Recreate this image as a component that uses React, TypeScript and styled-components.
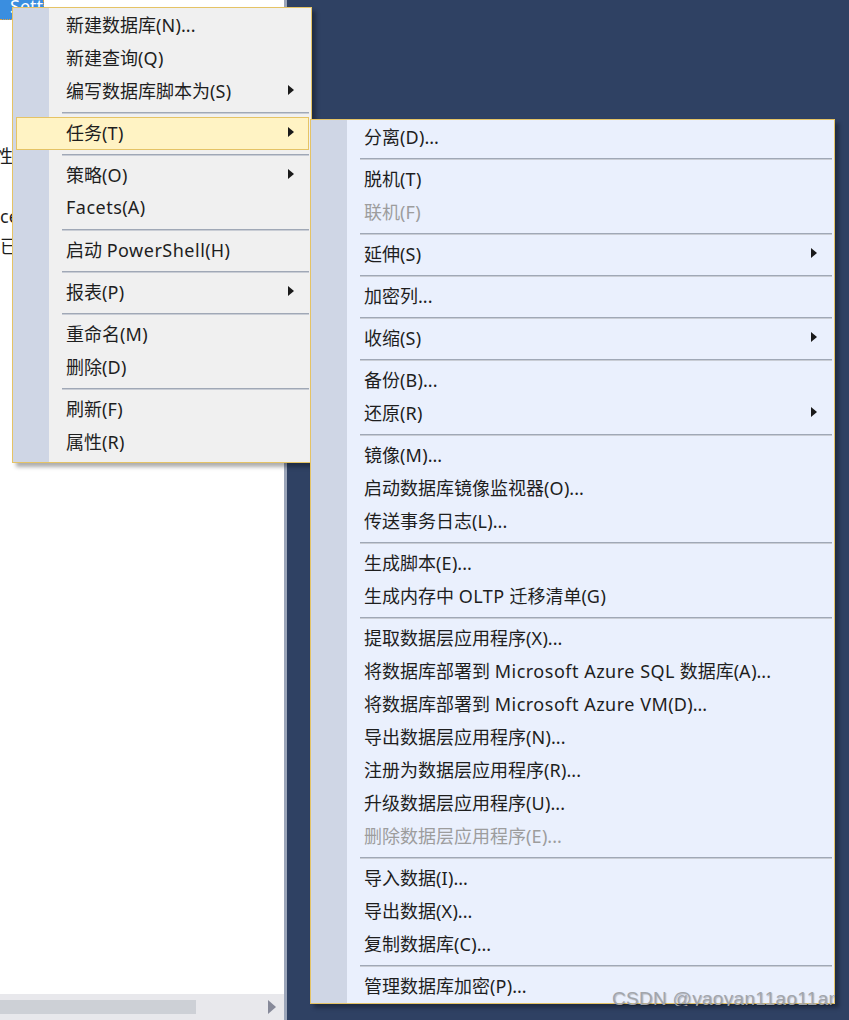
import React from 'react'
import styled, { createGlobalStyle } from 'styled-components'

const GlobalStyle = createGlobalStyle`
  html, body {
    margin: 0;
    padding: 0;
  }

  body {
    font-family: "Noto Sans", "Noto Sans CJK SC", sans-serif;
    font-size: 18px;
    color: #1e1e1e;
    overflow: hidden;
  }
`

type Entry =
  | { kind: 'item'; label: string; sub?: boolean; active?: boolean; disabled?: boolean }
  | { kind: 'sep' }

const sep: Entry = { kind: 'sep' }
const item = (label: string, extra: Partial<{ sub: boolean; active: boolean; disabled: boolean }> = {}): Entry => ({
  kind: 'item',
  label,
  ...extra,
})

const mainMenu: Entry[] = [
  item('新建数据库(N)...'),
  item('新建查询(Q)'),
  item('编写数据库脚本为(S)', { sub: true }),
  sep,
  item('任务(T)', { sub: true, active: true }),
  sep,
  item('策略(O)', { sub: true }),
  item('Facets(A)'),
  sep,
  item('启动 PowerShell(H)'),
  sep,
  item('报表(P)', { sub: true }),
  sep,
  item('重命名(M)'),
  item('删除(D)'),
  sep,
  item('刷新(F)'),
  item('属性(R)'),
]

const taskMenu: Entry[] = [
  item('分离(D)...'),
  sep,
  item('脱机(T)'),
  item('联机(F)', { disabled: true }),
  sep,
  item('延伸(S)', { sub: true }),
  sep,
  item('加密列...'),
  sep,
  item('收缩(S)', { sub: true }),
  sep,
  item('备份(B)...'),
  item('还原(R)', { sub: true }),
  sep,
  item('镜像(M)...'),
  item('启动数据库镜像监视器(O)...'),
  item('传送事务日志(L)...'),
  sep,
  item('生成脚本(E)...'),
  item('生成内存中 OLTP 迁移清单(G)'),
  sep,
  item('提取数据层应用程序(X)...'),
  item('将数据库部署到 Microsoft Azure SQL 数据库(A)...'),
  item('将数据库部署到 Microsoft Azure VM(D)...'),
  item('导出数据层应用程序(N)...'),
  item('注册为数据层应用程序(R)...'),
  item('升级数据层应用程序(U)...'),
  item('删除数据层应用程序(E)...', { disabled: true }),
  sep,
  item('导入数据(I)...'),
  item('导出数据(X)...'),
  item('复制数据库(C)...'),
  sep,
  item('管理数据库加密(P)...'),
]

const Screen = styled.div`
  position: relative;
  display: flex;
  width: 849px;
  height: 1020px;
  overflow: hidden;
  background: #2f4163;
`

const Explorer = styled.div`
  display: flex;
  flex-direction: column;
  width: 284px;
  flex: none;
  background: #ffffff;
  border-right: 3px solid #9ba5b9;
  overflow: hidden;
`

const TreeArea = styled.div`
  flex: 1;
  display: flex;
  flex-direction: column;
  align-items: flex-start;
`

const SelectedNode = styled.div`
  box-sizing: border-box;
  width: 44px;
  height: 20px;
  padding-left: 10px;
  background: #3a8ee0;
  border-right: 1px dotted #e0a040;
  border-bottom: 1px dotted #e0a040;
  color: #ffffff;
  line-height: 12px;
  white-space: nowrap;
`

const TreeList = styled.div`
  margin-top: 121px;
  display: flex;
  flex-direction: column;
`

const TreeRow = styled.div<{ $shift?: number }>`
  height: 30px;
  line-height: 30px;
  margin-left: ${(p) => p.$shift ?? 0}px;
  color: #1e1e1e;
  white-space: nowrap;
`

const HScroll = styled.div`
  display: flex;
  align-items: center;
  height: 26px;
  padding-right: 8px;
  background: #e8e8ec;
`

const ScrollThumb = styled.div`
  width: 196px;
  height: 14px;
  background: #cdd0d6;
`

const ScrollArrow = styled.svg`
  margin-left: auto;
  flex: none;
`

const Desk = styled.div`
  flex: 1;
  background: #2f4163;
`

const MenuBox = styled.div<{ $x: number; $y: number; $w: number; $bg: string; $padBottom: number }>`
  position: absolute;
  left: ${(p) => p.$x}px;
  top: ${(p) => p.$y}px;
  width: ${(p) => p.$w}px;
  box-sizing: border-box;
  padding: 1px 0 ${(p) => p.$padBottom}px;
  border: 1px solid #e5c365;
  background: linear-gradient(to right, #cfd6e5 36px, ${(p) => p.$bg} 36px);
  box-shadow: 4px 4px 4px rgba(0, 0, 0, 0.32);
`

const Item = styled.div<{ $active?: boolean; $disabled?: boolean }>`
  display: flex;
  align-items: center;
  box-sizing: border-box;
  height: 33px;
  margin: 0 2px 0 3px;
  padding: 0 14px 3px 49px;
  border: 1px solid ${(p) => (p.$active ? '#e5c365' : 'transparent')};
  background: ${(p) => (p.$active ? '#fff3c4' : 'transparent')};
  color: ${(p) => (p.$disabled ? '#9d9d9d' : '#1e1e1e')};
  white-space: nowrap;
`

/* Latin runs in the Windows UI font come out a little wider than Noto Sans */
const Latin = styled.span`
  letter-spacing: 0.5px;
`

const SubArrow = styled.svg`
  margin-left: auto;
  flex: none;
`

const Separator = styled.div`
  display: flex;
  align-items: center;
  height: 9px;
  margin: 0 2px 0 49px;

  &::before {
    content: '';
    flex: 1;
    height: 1px;
    background: #a0a8b6;
    border-bottom: 1px solid #c9cdd5;
  }
`

const Watermark = styled.div`
  position: absolute;
  left: 612px;
  top: 989px;
  width: 223px;
  height: 17px;
  overflow: hidden;
  font-family: "Liberation Sans", Arial, sans-serif;
  font-size: 19px;
  line-height: 20px;
  letter-spacing: 0.3px;
  color: #a2a5ab;
  text-shadow: 1px 1px 1px rgba(0, 0, 0, 0.22);
  white-space: nowrap;
`

const renderLabel = (label: string) =>
  label.split(/([A-Za-z][A-Za-z ]*[A-Za-z]|[A-Za-z])/).map((part, i) =>
    i % 2 === 1 ? <Latin key={i}>{part}</Latin> : part
  )

const Menu: React.FC<{ entries: Entry[]; x: number; y: number; w: number; bg: string; padBottom: number }> = ({
  entries,
  x,
  y,
  w,
  bg,
  padBottom,
}) => (
  <MenuBox $x={x} $y={y} $w={w} $bg={bg} $padBottom={padBottom}>
    {entries.map((e, i) =>
      e.kind === 'sep' ? (
        <Separator key={i} />
      ) : (
        <Item key={i} $active={e.active} $disabled={e.disabled}>
          <span>{renderLabel(e.label)}</span>
          {e.sub && (
            <SubArrow width="6" height="10" viewBox="0 0 6 10">
              <polygon points="0,0 6,5 0,10" fill="#1a1a1a" />
            </SubArrow>
          )}
        </Item>
      )
    )}
  </MenuBox>
)

const App: React.FC = () => (
  <>
    <GlobalStyle />
    <Screen>
      <Explorer>
        <TreeArea>
          <SelectedNode>Sett</SelectedNode>
          <TreeList>
            <TreeRow $shift={-23}>属性</TreeRow>
            <TreeRow />
            <TreeRow>ce</TreeRow>
            <TreeRow>已启用</TreeRow>
          </TreeList>
        </TreeArea>
        <HScroll>
          <ScrollThumb />
          <ScrollArrow width="8" height="14" viewBox="0 0 8 14">
            <polygon points="0,0 8,7 0,14" fill="#868999" />
          </ScrollArrow>
        </HScroll>
      </Explorer>
      <Desk />
      <Menu entries={mainMenu} x={12} y={7} w={300} bg="#f0f0f0" padBottom={3} />
      <Menu entries={taskMenu} x={310} y={119} w={525} bg="#eaf0fd" padBottom={0} />
      <Watermark>CSDN @yaoyan11ao11an</Watermark>
    </Screen>
  </>
)

export default App
